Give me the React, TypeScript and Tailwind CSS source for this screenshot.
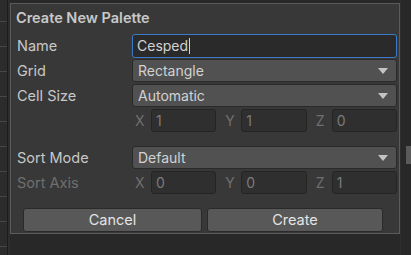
import React from "react";

const font = { fontFamily: "Inter, 'Noto Sans', sans-serif" };

function Arrow() {
  return (
    <svg width="10" height="6" viewBox="0 0 10 6" className="shrink-0">
      <path d="M0 0 L10 0 L5 6 Z" fill="#c4c4c4" />
    </svg>
  );
}

function Dropdown({ value }: { value: string }) {
  return (
    <div className="flex h-[23px] flex-1 items-center justify-between rounded-[3px] border border-[#2a2a2a] bg-[#515151] pl-[5px] pr-[8px] text-[#d2d2d2]">
      <span>{value}</span>
      <Arrow />
    </div>
  );
}

function Vec({ vals }: { vals: string[] }) {
  const labels = ["X", "Y", "Z"];
  return (
    <div className="flex flex-1 items-center">
      {vals.map((v, i) => (
        <div key={i} className={`flex flex-1 items-center ${i > 0 ? "ml-[6px]" : ""}`}>
          <span className="w-[19px] pl-[3px] text-[#6f6f6f]">{labels[i]}</span>
          <div className="flex h-[23px] flex-1 items-center rounded-[3px] border border-[#242424] bg-[#2f2f2f] pl-[4px] text-[#7b7b7b]">
            {v}
          </div>
        </div>
      ))}
    </div>
  );
}

function Row({ label, children, dim, className = "" }: { label: string; children: React.ReactNode; dim?: boolean; className?: string }) {
  return (
    <div className={`flex h-[23px] items-center ${className}`}>
      <span className={`w-[115px] shrink-0 text-[14.5px] ${dim ? "text-[#6f6f6f]" : "text-[#c8c8c8]"}`}>{label}</span>
      {children}
    </div>
  );
}

export default function App() {
  const lines = [22, 47, 72, 97, 122, 147, 172, 197, 222, 240];
  return (
    <div className="flex h-[255px] w-[411px] overflow-hidden bg-[#282828] text-[14px]" style={font}>
      {/* left strip */}
      <div className="flex h-full w-[7px] shrink-0 flex-col bg-[#2c2c2c]">
        <div className="h-[22px] shrink-0 border-b border-[#474747]" />
        {lines.slice(1).map((y, i) => (
          <div key={i} className="h-[25px] shrink-0 border-b border-[#474747]" />
        ))}
      </div>
      <div className="h-full w-px shrink-0 bg-[#1c1c1c]" />
      <div className="h-full w-[2px] shrink-0 bg-[#2e2e2e]" />
      {/* panel */}
      <div className="mt-[3px] flex h-[231px] w-[390px] shrink-0 flex-col border border-[#5b5b5b] bg-[#383838] pl-[6px] pr-[2px]">
        <div className="-ml-[1px] mt-[4px] h-[20px] text-[14.5px] font-semibold leading-[20px] text-[#c8c8c8]">
          Create New Palette
        </div>
        <Row label="Name" className="mt-[6px]">
          <div className="flex h-[24px] flex-1 items-center rounded-[3px] border border-[#3b7ac6] bg-[#2a2a2a] pl-[4px] text-[#d2d2d2]">
            Cesped<span className="ml-[1px] inline-block h-[16px] w-px bg-[#d2d2d2]" />
          </div>
        </Row>
        <Row label="Grid" className="mt-[2px]">
          <Dropdown value="Rectangle" />
        </Row>
        <Row label="Cell Size" className="mt-[2px]">
          <Dropdown value="Automatic" />
        </Row>
        <Row label="" className="mt-[2px]">
          <Vec vals={["1", "1", "0"]} />
        </Row>
        <Row label="Sort Mode" className="mt-[14px]">
          <Dropdown value="Default" />
        </Row>
        <Row label="Sort Axis" dim className="mt-[2px]">
          <Vec vals={["0", "0", "1"]} />
        </Row>
        <div className="mt-[14px] flex gap-[5px] pl-[6px] pr-[14px]">
          <div className="flex h-[24px] w-[179px] items-center justify-center rounded-[3px] border border-[#2a2a2a] bg-[#585858] text-[14.5px] text-[#e4e4e4]">
            Cancel
          </div>
          <div className="flex h-[24px] flex-1 items-center justify-center rounded-[3px] border border-[#2a2a2a] bg-[#585858] text-[14.5px] text-[#e4e4e4]">
            Create
          </div>
        </div>
      </div>
      {/* right strip */}
      <div className="h-full w-px shrink-0 bg-[#2e2e2e]" />
      <div className="flex h-full flex-1 flex-col items-end">
        <div className="mt-[146px] h-[18px] w-[5px] bg-[#5a5a5a]" />
      </div>
    </div>
  );
}
